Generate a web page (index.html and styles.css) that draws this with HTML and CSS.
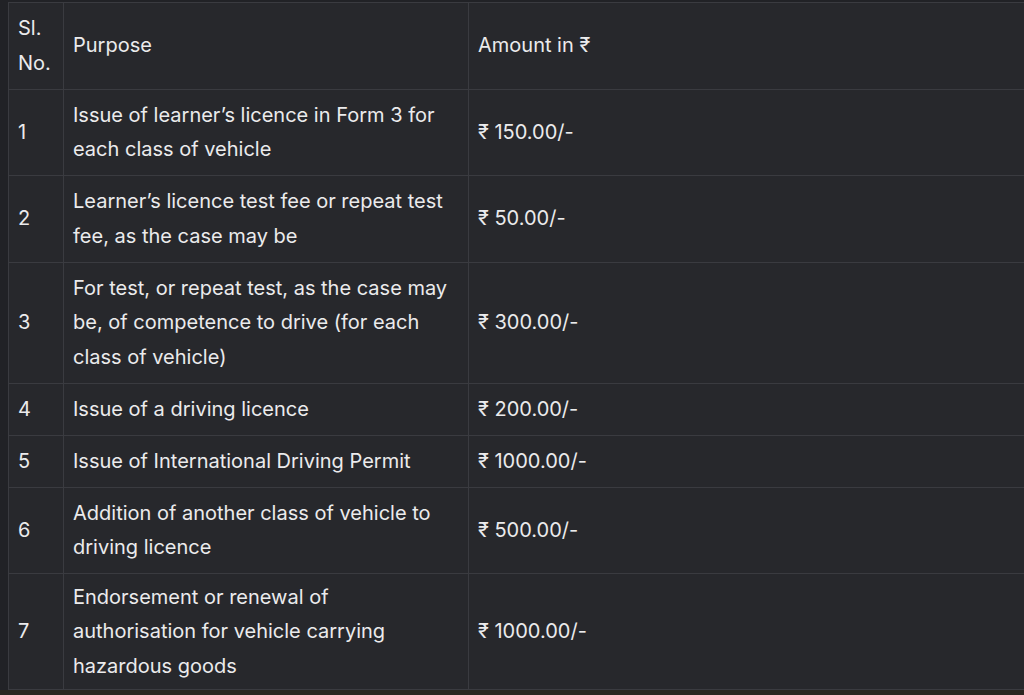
FILE: index.html
```html
<!DOCTYPE html>
<html lang="en">
<head>
  <meta charset="UTF-8" />
  <meta name="viewport" content="width=device-width, initial-scale=1.0"/>
  <title>Driving licence fees</title>
  <link rel="stylesheet" href="styles.css">
</head>
<body>
  <table class="fees">
    <thead>
      <tr>
        <th class="col-no">Sl.<br>No.</th>
        <th class="col-purpose">Purpose</th>
        <th class="col-amount">Amount in ₹</th>
      </tr>
    </thead>
    <tbody>
      <tr>
        <td>1</td>
        <td>Issue of learner’s licence in Form 3 for each class of vehicle</td>
        <td>₹ 150.00/-</td>
      </tr>
      <tr>
        <td>2</td>
        <td>Learner’s licence test fee or repeat test fee, as the case may be</td>
        <td>₹ 50.00/-</td>
      </tr>
      <tr>
        <td>3</td>
        <td>For test, or repeat test, as the case may be, of competence to drive (for each class of vehicle)</td>
        <td>₹ 300.00/-</td>
      </tr>
      <tr>
        <td>4</td>
        <td>Issue of a driving licence</td>
        <td>₹ 200.00/-</td>
      </tr>
      <tr>
        <td>5</td>
        <td>Issue of International Driving Permit</td>
        <td>₹ 1000.00/-</td>
      </tr>
      <tr>
        <td>6</td>
        <td>Addition of another class of vehicle to driving licence</td>
        <td>₹ 500.00/-</td>
      </tr>
      <tr class="last">
        <td>7</td>
        <td>Endorsement or renewal of authorisation for vehicle carrying hazardous goods</td>
        <td>₹ 1000.00/-</td>
      </tr>
    </tbody>
  </table>
  <div class="footer-strip"></div>
</body>
</html>
```

FILE: styles.css
```css
html, body { margin: 0; height: 100%; }
body {
  background: #212226;
  padding: 2px 0 0 8px;
  box-sizing: border-box;
  overflow: hidden;
  font-family: Inter, "Noto Sans", sans-serif;
  color: #ebebec;
}
.fees {
  border-collapse: collapse;
  table-layout: fixed;
  width: 1040px;
  background: #27282c;
}
.fees th, .fees td {
  border: 1px solid #3a3b40;
  padding: 8px 9px 8.5px;
  font-size: 20px;
  line-height: 34.5px;
  font-weight: 400;
  text-align: left;
  vertical-align: middle;
}
.fees td:nth-child(2), .fees th.col-purpose { padding-right: 16px; }
.fees tr.last td { padding-top: 5.5px; padding-bottom: 5.5px; }
.col-no { width: 36px; }
.col-purpose { width: 379px; }
.footer-strip {
  height: 6px;
  background: #2a2521;
  margin-left: -8px;
}
```
